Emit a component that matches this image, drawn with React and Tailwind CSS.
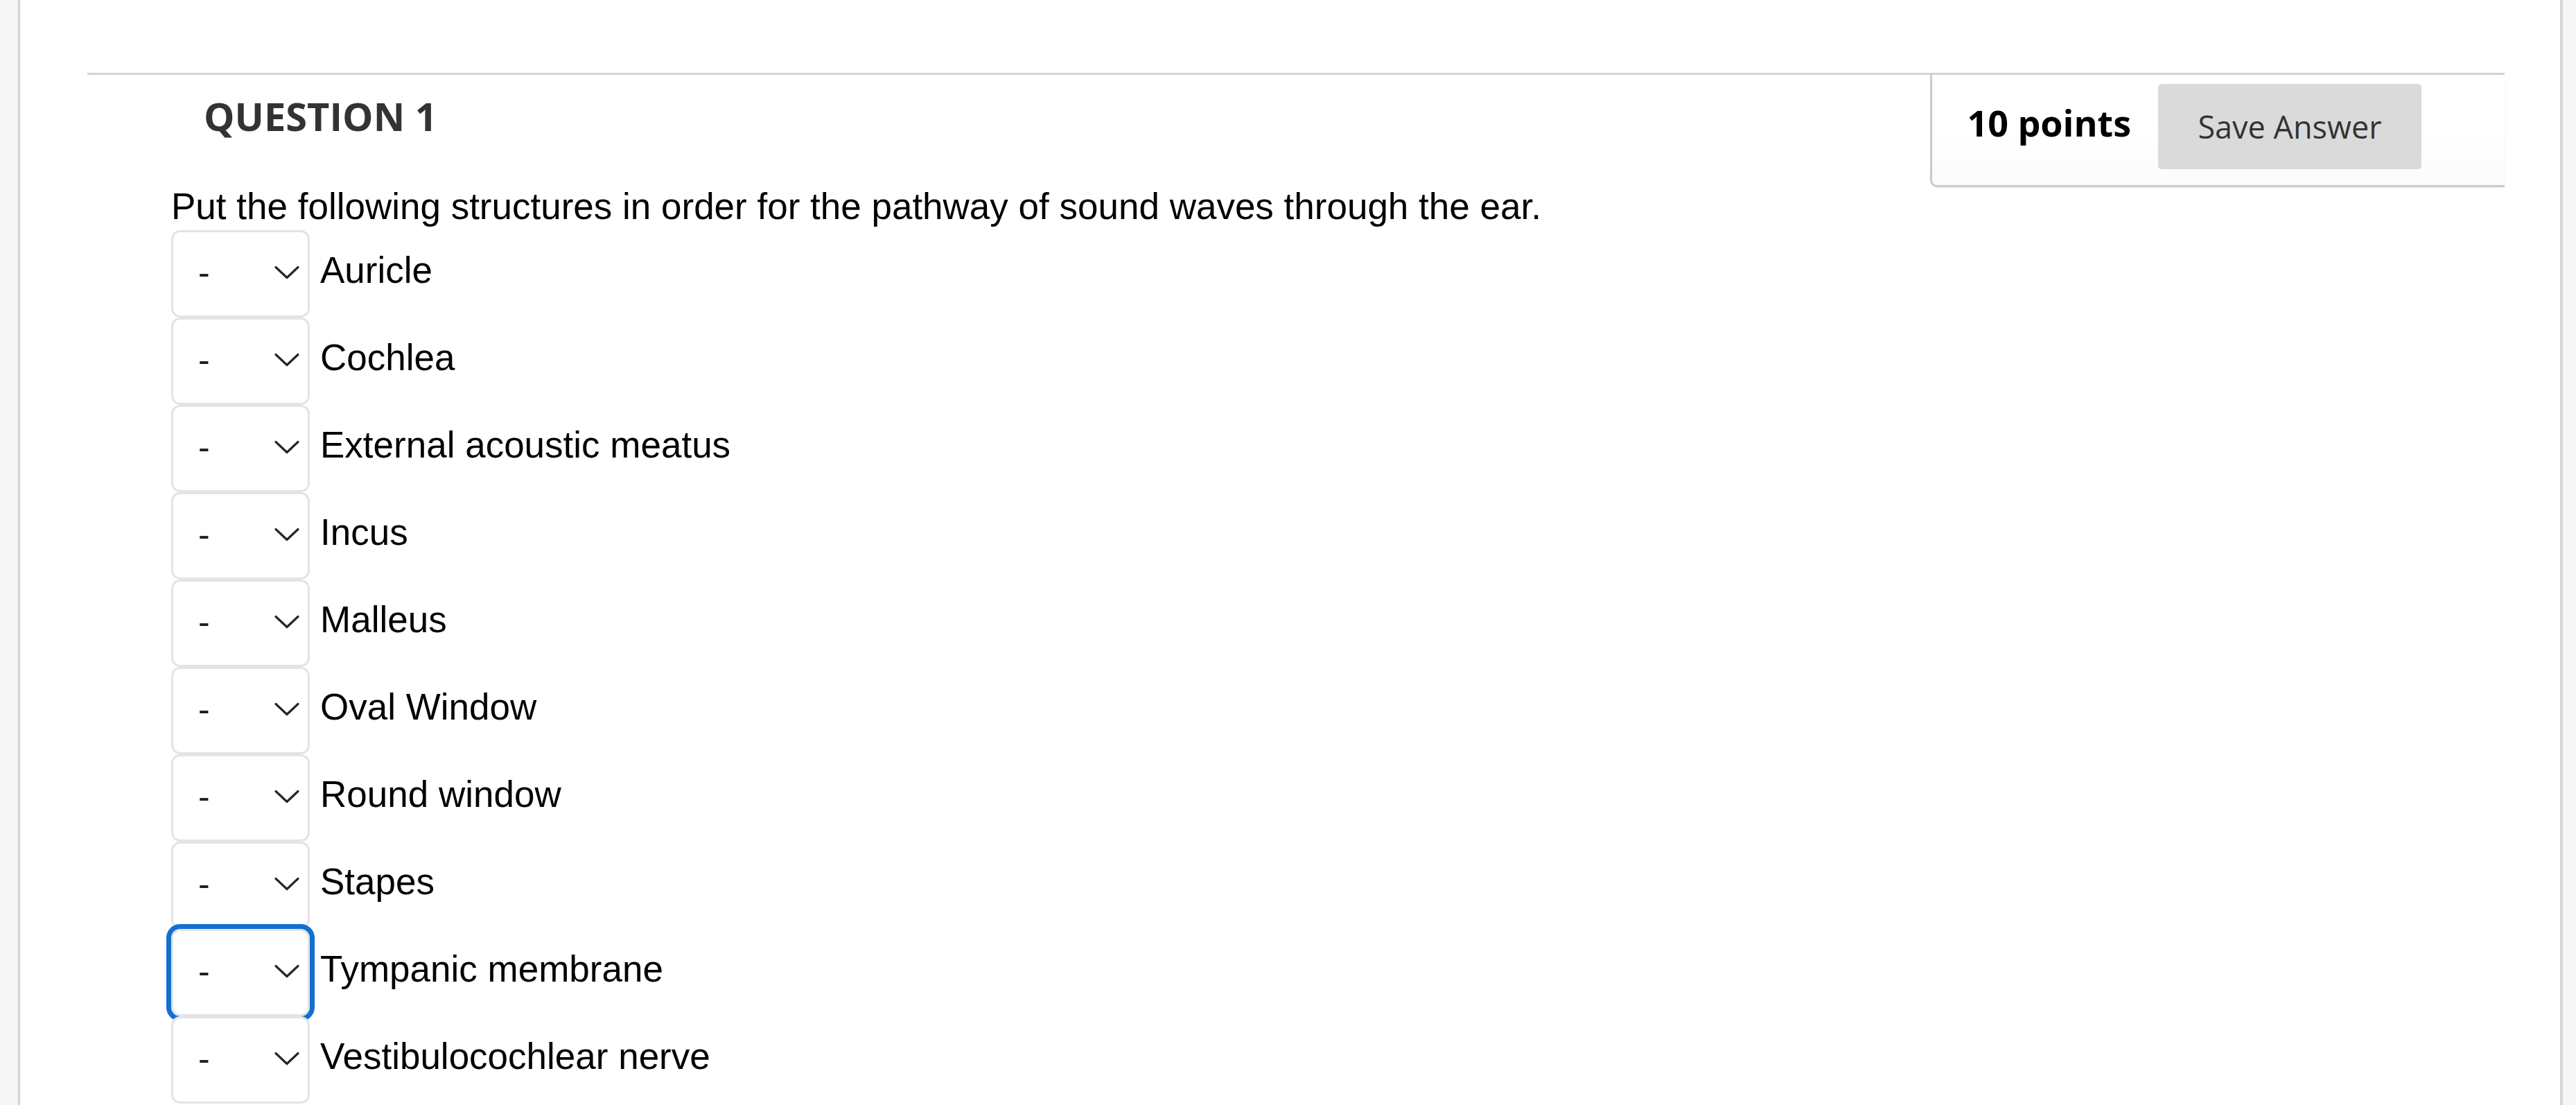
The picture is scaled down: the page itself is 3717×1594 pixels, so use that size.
import React from "react";

const options = [
  "Auricle",
  "Cochlea",
  "External acoustic meatus",
  "Incus",
  "Malleus",
  "Oval Window",
  "Round window",
  "Stapes",
  "Tympanic membrane",
  "Vestibulocochlear nerve",
];

function Chevron() {
  return (
    <svg width="36" height="20" viewBox="0 0 36 20" fill="none">
      <path d="M2 2.5 L18 17.5 L34 2.5" stroke="#262626" strokeWidth="3.2" strokeLinecap="round" strokeLinejoin="round" />
    </svg>
  );
}

function Row({ label, focused }) {
  return (
    <div className="flex h-[126px] items-center">
      <div
        className={
          "relative flex h-full w-[200px] shrink-0 items-center justify-between rounded-[13px] border-[3px] border-[#e4e4e4] bg-white pl-[36px] pr-[12px] " +
          (focused ? "outline-[7px] outline-solid outline-[#1270d0]" : "")
        }
      >
        <span className="pb-[4px] text-[50px] leading-[50px] text-[#1e1e1e]">-</span>
        <span className="-mt-[5px] flex">
          <Chevron />
        </span>
      </div>
      <span className="ml-[15px] pb-[12px] text-[53px] leading-[53px] text-black">{label}</span>
    </div>
  );
}

export default function App() {
  return (
    <div
      className="flex h-[1594px] w-[3717px] overflow-hidden bg-white"
      style={{ fontFamily: '"Liberation Sans", Arial, sans-serif' }}
    >
      <div className="w-[29px] shrink-0 border-r-[3px] border-[#d4d4d4] bg-[#f6f6f6]" />
      <div className="flex-1 pl-[97px] pr-[80px] pt-[105px]">
        <div className="border-t-[3px] border-[#d3d3d3]">
          <div className="flex h-[162px] items-start justify-between">
            <h3
              className="ml-[168px] mt-[31px] text-[56px] font-bold leading-[56px] text-[#333333]"
              style={{ fontFamily: '"Open Sans", sans-serif' }}
            >
              QUESTION 1
            </h3>
            <div
              className="flex h-[162px] items-start gap-[39px] rounded-bl-[10px] border-b-[3px] border-l-[3px] border-[#cbcbcb] bg-linear-to-b from-white via-white to-[#fbfbfb] pl-[50px] pr-[120px] shadow-[0_1px_2px_rgba(0,0,0,0.08)]"
              style={{ fontFamily: '"Open Sans", sans-serif' }}
            >
              <span className="mt-[43px] text-[52px] font-bold leading-[52px] text-black">10 points</span>
              <button className="mt-[13px] flex h-[123px] w-[380px] items-center justify-center rounded-[5px] bg-[#dadada] text-[45px] leading-[45px] text-[#333333]">
                Save Answer
              </button>
            </div>
          </div>
          <div className="pl-[121px]">
            <p className="mt-[1px] text-[53px] leading-[53px] text-black">
              Put the following structures in order for the pathway of sound waves through the ear.
            </p>
            <div className="mt-[8px] flex flex-col">
              {options.map((o, i) => (
                <Row key={o} label={o} focused={i === 8} />
              ))}
            </div>
          </div>
        </div>
      </div>
      <div className="w-[23px] shrink-0 border-l-[4px] border-[#d4d4d4] bg-[#f6f6f6]" />
    </div>
  );
}
